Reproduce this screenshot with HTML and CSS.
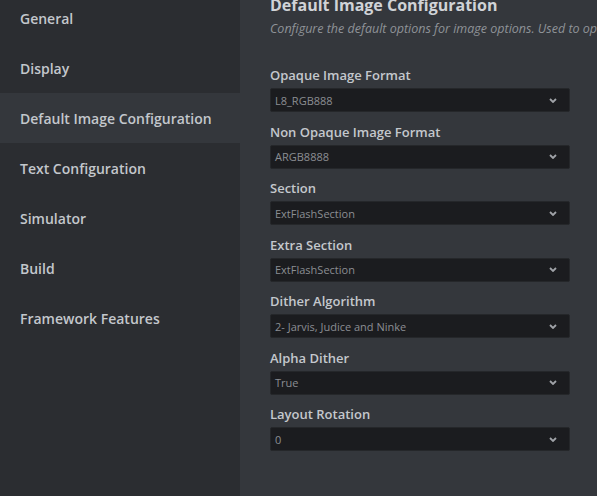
FILE: index.html
```html
<!DOCTYPE html>
<html>
<head>
<meta charset="utf-8">
<link rel="stylesheet" href="styles.css">
</head>
<body>
<div class="app">
  <nav class="sidebar">
    <div class="nav-item">General</div>
    <div class="nav-item">Display</div>
    <div class="nav-item active">Default Image Configuration</div>
    <div class="nav-item">Text Configuration</div>
    <div class="nav-item">Simulator</div>
    <div class="nav-item">Build</div>
    <div class="nav-item">Framework Features</div>
  </nav>
  <main class="content">
    <h1 class="title">Default Image Configuration</h1>
    <p class="subtitle">Configure the default options for image options. Used to optimize images that have no specific configuration.</p>
    <div class="fields">
      <div class="field">
        <label class="label">Opaque Image Format</label>
        <div class="select"><span>L8_RGB888</span><svg class="chev" viewBox="0 0 8 5"><path d="M1 1 L4 4 L7 1" /></svg></div>
      </div>
      <div class="field">
        <label class="label">Non Opaque Image Format</label>
        <div class="select"><span>ARGB8888</span><svg class="chev" viewBox="0 0 8 5"><path d="M1 1 L4 4 L7 1" /></svg></div>
      </div>
      <div class="field">
        <label class="label">Section</label>
        <div class="select"><span>ExtFlashSection</span><svg class="chev" viewBox="0 0 8 5"><path d="M1 1 L4 4 L7 1" /></svg></div>
      </div>
      <div class="field">
        <label class="label">Extra Section</label>
        <div class="select"><span>ExtFlashSection</span><svg class="chev" viewBox="0 0 8 5"><path d="M1 1 L4 4 L7 1" /></svg></div>
      </div>
      <div class="field">
        <label class="label">Dither Algorithm</label>
        <div class="select"><span>2- Jarvis, Judice and Ninke</span><svg class="chev" viewBox="0 0 8 5"><path d="M1 1 L4 4 L7 1" /></svg></div>
      </div>
      <div class="field">
        <label class="label">Alpha Dither</label>
        <div class="select"><span>True</span><svg class="chev" viewBox="0 0 8 5"><path d="M1 1 L4 4 L7 1" /></svg></div>
      </div>
      <div class="field">
        <label class="label">Layout Rotation</label>
        <div class="select"><span>0</span><svg class="chev" viewBox="0 0 8 5"><path d="M1 1 L4 4 L7 1" /></svg></div>
      </div>
    </div>
  </main>
</div>
</body>
</html>
```

FILE: styles.css
```css
* { box-sizing: border-box; }
html, body {
  margin: 0;
  padding: 0;
  height: 100%;
  overflow: hidden;
  background: #34373c;
  font-family: "Open Sans", "Noto Sans", sans-serif;
}
.app {
  display: flex;
  height: 100%;
}
.sidebar {
  width: 240px;
  flex: 0 0 240px;
  background: #2b2d31;
  margin-top: -7px;
  height: calc(100% + 7px);
}
.nav-item {
  height: 50px;
  display: flex;
  align-items: center;
  padding-left: 20px;
  color: #c3c7cc;
  font-size: 14px;
  font-weight: 600;
  white-space: nowrap;
}
.nav-item.active {
  background: #34373c;
}
.content {
  flex: 1;
  min-width: 0;
  padding-left: 30px;
  margin-top: -6px;
  overflow: hidden;
}
.title {
  margin: 0;
  font-size: 16px;
  line-height: 22px;
  font-weight: 700;
  color: #d0d3d7;
  white-space: nowrap;
}
.subtitle {
  margin: 3.5px 0 0;
  font-size: 12.5px;
  line-height: 17px;
  font-style: italic;
  color: #8f9398;
  white-space: nowrap;
}
.fields {
  margin-top: 29.5px;
  width: 300px;
}
.field {
  margin-bottom: 10.5px;
}
.label {
  display: block;
  font-size: 13px;
  line-height: 18px;
  font-weight: 600;
  color: #c4c8cd;
  margin-bottom: 4px;
}
.select {
  height: 24px;
  background: #1b1c1f;
  border: 1px solid #25272a;
  border-radius: 2px;
  display: flex;
  align-items: center;
  justify-content: space-between;
  padding: 0 12px 0 4px;
  font-size: 11px;
  color: #8b8e93;
}
.chev {
  width: 8px;
  height: 5px;
  fill: none;
  stroke: #a0a3a8;
  stroke-width: 1.8;
}
```
